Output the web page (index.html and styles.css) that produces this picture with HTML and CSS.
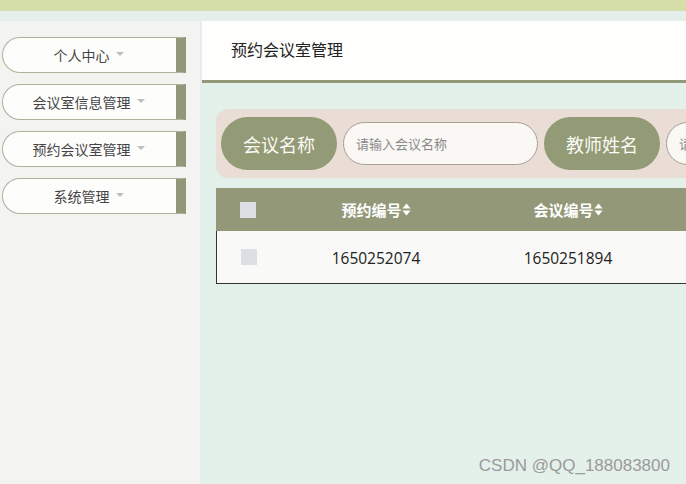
FILE: index.html
```html
<!DOCTYPE html>
<html lang="zh-CN">
<head>
<meta charset="utf-8">
<title>预约会议室管理</title>
<link rel="stylesheet" href="styles.css">
</head>
<body>
<div class="topbar"></div>
<div class="strip"></div>
<div class="layout">
  <aside class="sidebar">
    <div class="nav-item"><span class="nav-label">个人中心</span><span class="caret"></span></div>
    <div class="nav-item"><span class="nav-label">会议室信息管理</span><span class="caret"></span></div>
    <div class="nav-item"><span class="nav-label">预约会议室管理</span><span class="caret"></span></div>
    <div class="nav-item"><span class="nav-label">系统管理</span><span class="caret"></span></div>
  </aside>
  <main class="main">
    <div class="page-header">预约会议室管理</div>
    <div class="content">
      <div class="search-bar">
        <div class="search-btn">会议名称</div>
        <div class="search-input">请输入会议名称</div>
        <div class="search-btn">教师姓名</div>
        <div class="search-input">请输入教师姓名</div>
      </div>
      <div class="table">
        <div class="thead">
          <div class="cell cell-check"><span class="checkbox"></span></div>
          <div class="cell">预约编号<svg class="sort" viewBox="0 0 8 12" width="9" height="13"><path d="M4 0.5 L7.8 5 L0.2 5 Z M4 11.5 L7.8 7 L0.2 7 Z" fill="#fff"/></svg></div>
          <div class="cell">会议编号<svg class="sort" viewBox="0 0 8 12" width="9" height="13"><path d="M4 0.5 L7.8 5 L0.2 5 Z M4 11.5 L7.8 7 L0.2 7 Z" fill="#fff"/></svg></div>
        </div>
        <div class="trow">
          <div class="cell cell-check"><span class="checkbox"></span></div>
          <div class="cell num">1650252074</div>
          <div class="cell num">1650251894</div>
        </div>
      </div>
    </div>
    <div class="watermark">CSDN @QQ_188083800</div>
  </main>
</div>
</body>
</html>
```
FILE: styles.css
```css
* { box-sizing: border-box; }
html, body { margin: 0; padding: 0; }
body {
  width: 686px;
  height: 484px;
  overflow: hidden;
  font-family: "Noto Sans CJK SC", "Noto Sans", sans-serif;
  background: #e4f0ea;
}
.topbar { height: 11px; background: #d6dfa9; }
.strip { height: 10px; background: #e5eeeb; }
.layout { display: flex; height: 463px; }
.sidebar {
  width: 202px;
  flex: none;
  background: #f3f3f1;
  border-right: 2px solid #e6edf0;
  padding-top: 16px;
  display: flex;
  flex-direction: column;
  gap: 11px;
}
.nav-item {
  margin-left: 2px;
  width: 184px;
  height: 36px;
  background: #fdfdfc;
  border: 1px solid #b0b098;
  border-right: 10px solid #93977a;
  border-radius: 18px 0 0 18px;
  display: flex;
  align-items: center;
  justify-content: center;
  gap: 6px;
  font-size: 14px;
  color: #444;
  padding-right: 2px;
}
.caret {
  width: 0; height: 0;
  border-left: 4px solid transparent;
  border-right: 4px solid transparent;
  border-top: 4px solid #bdbdbd;
  margin-top: -2px;
}
.main {
  flex: 1;
  position: relative;
  background: #e4f0ea;
  overflow: hidden;
}
.page-header {
  height: 62px;
  background: #fefefd;
  border-bottom: 3px solid #939878;
  padding-left: 29px;
  display: flex;
  align-items: center;
  padding-bottom: 3px;
  font-size: 16px;
  color: #222;
}
.content { padding: 26px 0 0 14px; }
.search-bar {
  width: 620px;
  height: 69px;
  background: #eaddd6;
  border-radius: 12px;
  padding: 0 5px;
  display: flex;
  align-items: center;
  gap: 6px;
}
.search-btn {
  flex: none;
  width: 116px;
  height: 53px;
  border-radius: 27px;
  background: #939a76;
  color: #fbfbf5;
  font-size: 18px;
  display: flex;
  align-items: center;
  justify-content: center;
}
.search-input {
  flex: none;
  width: 195px;
  height: 43px;
  border-radius: 22px;
  border: 1px solid #a99f8e;
  background: #faf8f5;
  color: #8a8a8a;
  font-size: 13px;
  display: flex;
  align-items: center;
  padding-left: 12px;
}
.table { margin-top: 10px; width: 620px; }
.thead, .trow { display: flex; }
.thead {
  height: 43px;
  background: #939878;
  color: #fff;
  font-weight: bold;
  font-size: 15px;
}
.trow {
  height: 53px;
  background: #f9f9f7;
  border-left: 1px solid #333;
  border-bottom: 1px solid #333;
  color: #222;
}
.cell {
  width: 192px;
  flex: none;
  display: flex;
  align-items: center;
  justify-content: center;
}
.cell-check { width: 64px; }
.trow .cell-check { width: 63px; }
.checkbox {
  width: 16px;
  height: 16px;
  background: #dcdfe3;
  display: block;
}
.sort { margin-left: 0; }
.num {
  font-family: "Open Sans", "Noto Sans", sans-serif;
  font-size: 15.5px;
  padding-top: 1px;
}
.watermark {
  position: absolute;
  right: 16px;
  bottom: 8px;
  font-family: "Liberation Sans", Arial, sans-serif;
  font-size: 17px;
  color: #9a9a9a;
}
```
